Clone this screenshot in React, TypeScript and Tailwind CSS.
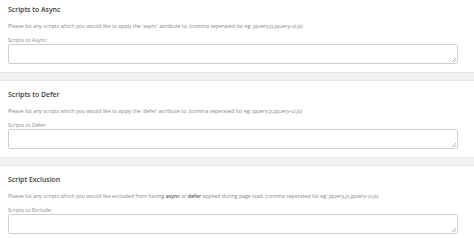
import React from 'react'

interface Section {
  title: string
  label: string
  desc: React.ReactNode
}

const sections: Section[] = [
  {
    title: 'Scripts to Async',
    label: 'Scripts to Async:',
    desc: "Please list any scripts which you would like to apply the 'async' attribute to. (comma seperated list eg: jquery.js,jquery-ui.js)",
  },
  {
    title: 'Scripts to Defer',
    label: 'Scripts to Defer:',
    desc: "Please list any scripts which you would like to apply the 'defer' attribute to. (comma seperated list eg: jquery.js,jquery-ui.js)",
  },
  {
    title: 'Script Exclusion',
    label: 'Scripts to Exclude:',
    desc: (
      <>
        Please list any scripts which you would like excluded from having{' '}
        <b className="font-semibold text-[#555]">async</b> or{' '}
        <b className="font-semibold text-[#555]">defer</b> applied during page
        load. (comma seperated list eg: jquery.js,jquery-ui.js)
      </>
    ),
  },
]

function Panel({ title, label, desc }: Section) {
  return (
    <div className="border-y border-[#e6e6e6] bg-white px-[8px] pt-[9px] pb-[8px]">
      <h2 className="h-[10px] text-[6.9px] leading-[10px] font-semibold text-[#3c3c3c]">
        {title}
      </h2>
      <p className="mt-[7px] h-[8px] text-[5.2px] leading-[8px] whitespace-nowrap text-[#858585]">
        {desc}
      </p>
      <label className="mt-[7px] block h-[7px] text-[5.2px] leading-[7px] text-[#8a8a8a]">
        {label}
      </label>
      <div className="relative h-[20px] w-[450px]">
        <textarea
          className="block h-full w-full resize-none rounded-[2px] border border-[#cfcfcf] bg-white outline-none"
          aria-label={label}
        />
        <svg
          className="pointer-events-none absolute right-[2px] bottom-[2px]"
          width="4"
          height="4"
          viewBox="0 0 4 4"
        >
          <path d="M4 0 L0 4 M4 2 L2 4" stroke="#a8a8a8" strokeWidth="0.8" />
        </svg>
      </div>
    </div>
  )
}

export default function App() {
  return (
    <div
      className="h-[238px] w-[474px] overflow-hidden bg-[#f1f1f1]"
      style={{ fontFamily: '"Open Sans", "Noto Sans", sans-serif' }}
    >
      <div className="-mt-[5px] flex flex-col gap-[7px]">
        {sections.map((s) => (
          <Panel key={s.title} {...s} />
        ))}
      </div>
    </div>
  )
}
